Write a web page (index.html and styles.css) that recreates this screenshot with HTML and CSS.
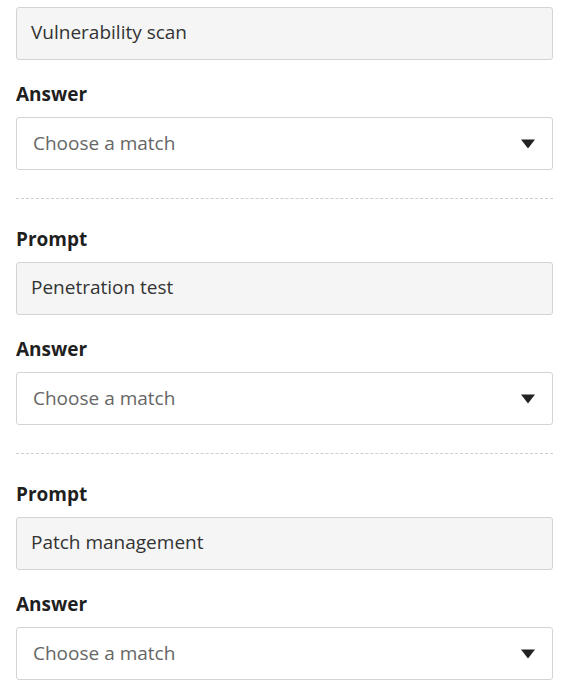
FILE: index.html
```html
<!DOCTYPE html>
<html lang="en">
  <head>
    <meta charset="UTF-8" />
    <meta name="viewport" content="width=device-width, initial-scale=1.0" />
    <title>Matching</title>
    <link rel="stylesheet" href="styles.css">
  </head>
  <body>
    <div class="match-list">
      <div class="pair">
        <div class="prompt">Vulnerability scan</div>
        <div class="label answer">Answer</div>
        <div class="select">
          <span class="placeholder">Choose a match</span>
          <svg class="arrow" width="14" height="10" viewBox="0 0 14 10">
            <path d="M0 0.5 H14 L7 9.5 Z" />
          </svg>
        </div>
      </div>

      <div class="pair">
        <div class="label">Prompt</div>
        <div class="prompt">Penetration test</div>
        <div class="label answer">Answer</div>
        <div class="select">
          <span class="placeholder">Choose a match</span>
          <svg class="arrow" width="14" height="10" viewBox="0 0 14 10">
            <path d="M0 0.5 H14 L7 9.5 Z" />
          </svg>
        </div>
      </div>

      <div class="pair">
        <div class="label">Prompt</div>
        <div class="prompt">Patch management</div>
        <div class="label answer">Answer</div>
        <div class="select">
          <span class="placeholder">Choose a match</span>
          <svg class="arrow" width="14" height="10" viewBox="0 0 14 10">
            <path d="M0 0.5 H14 L7 9.5 Z" />
          </svg>
        </div>
      </div>
    </div>
  </body>
</html>
```

FILE: styles.css
```css
* {
  box-sizing: border-box;
}

body {
  margin: 0;
  padding: 0;
  font-family: "Open Sans", Arial, sans-serif;
  background: #fff;
  color: #222;
}

.match-list {
  padding: 0 28px 0 16px;
}

.pair {
  padding: 28px 0;
  border-bottom: 1px dashed #cfcfcf;
}

/* list is scrolled, first pair starts at its prompt box */
.pair:first-child {
  padding-top: 7px;
}

.label {
  font-size: 19px;
  line-height: 25px;
  font-weight: 700;
  margin-bottom: 10px;
  color: #1f1f1f;
}

.label.answer {
  margin-top: 22px;
}

.prompt,
.select {
  font-size: 19px;
  line-height: 25px;
  padding: 13px 14px;
  border: 1px solid #d4d4d4;
  border-radius: 3px;
}

.prompt {
  background: #f5f5f5;
  color: #333;
  padding-top: 12px;
  padding-bottom: 14px;
}

.select {
  display: flex;
  align-items: center;
  justify-content: space-between;
  background: #fff;
  padding-left: 16px;
  padding-right: 17px;
  cursor: pointer;
}

.placeholder {
  color: #666;
}

.arrow {
  fill: #222;
  display: block;
}
```
